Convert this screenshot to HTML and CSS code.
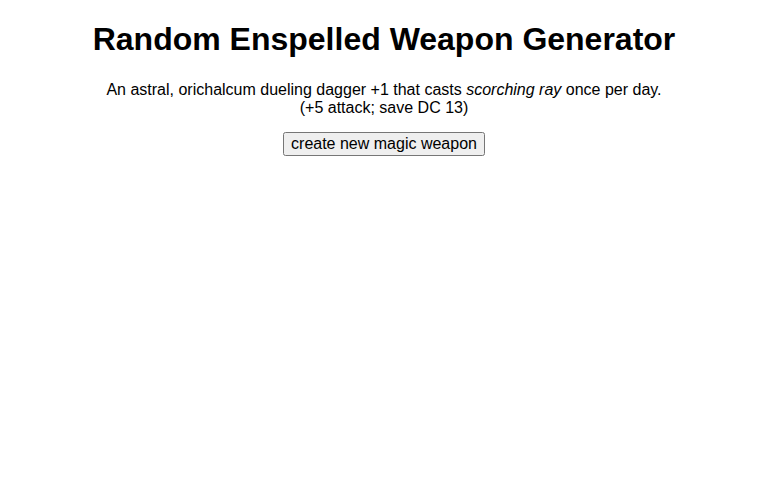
FILE: index.html
```html
<!DOCTYPE html>
<html lang="en">
<head>
    <meta charset="UTF-8">
    <meta name="viewport" content="width=device-width, initial-scale=1.0">
    <title>Random Enspelled Weapon Generator</title>
    <link rel="stylesheet" href="styles.css">
</head>
<body>
    <h1>Random Enspelled Weapon Generator</h1>

    <p id="weapon">An astral, orichalcum dueling dagger +1 that casts <i>scorching ray</i> once per day.<br>(+5 attack; save DC 13)</p>

    <button class="generate" onclick="location.reload()">create new magic weapon</button>
</body>
</html>
```

FILE: styles.css
```css
body {
    font-family: 'Liberation Sans', Arial, sans-serif;
    text-align: center;
    color: #000;
    background-color: #fff;
}

h1 {
    margin-top: 13px;
    margin-bottom: 22.5px;
}

#weapon {
    margin-bottom: 15px;
}

.generate {
    font-family: 'Liberation Sans', Arial, sans-serif;
    font-size: 16px;
}
```
